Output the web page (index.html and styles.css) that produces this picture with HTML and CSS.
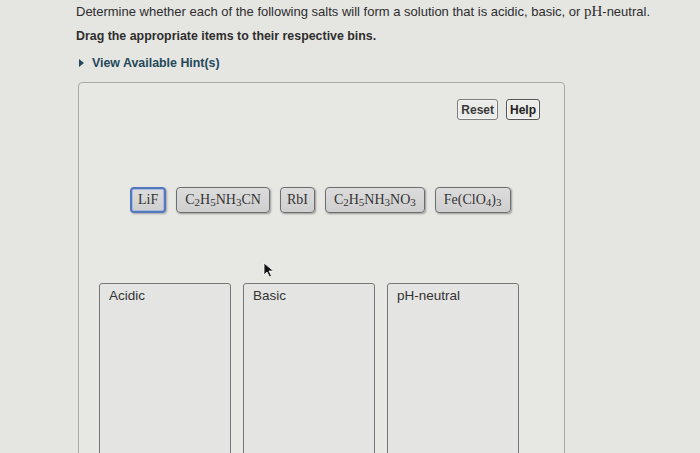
FILE: index.html
```html
<!DOCTYPE html>
<html>
<head>
<meta charset="utf-8">
<link rel="stylesheet" href="styles.css">
</head>
<body>
<div class="page">
  <p class="q">Determine whether each of the following salts will form a solution that is acidic, basic, or <span class="math">pH</span>-neutral.</p>
  <p class="instr">Drag the appropriate items to their respective bins.</p>
  <p class="hint"><span class="tri"></span>View Available Hint(s)</p>
  <div class="panel">
    <div class="tools">
      <button class="btn">Reset</button>
      <button class="btn help">Help</button>
    </div>
    <div class="items">
      <span class="chip sel">LiF</span>
      <span class="chip">C<sub>2</sub>H<sub>5</sub>NH<sub>3</sub>CN</span>
      <span class="chip short">RbI</span>
      <span class="chip">C<sub>2</sub>H<sub>5</sub>NH<sub>3</sub>NO<sub>3</sub></span>
      <span class="chip">Fe(ClO<sub>4</sub>)<sub>3</sub></span>
    </div>
    <div class="bins">
      <div class="bin"><span class="lbl">Acidic</span></div>
      <div class="bin"><span class="lbl">Basic</span></div>
      <div class="bin"><span class="lbl">pH-neutral</span></div>
    </div>
    <svg class="cursor" width="12" height="16" viewBox="0 0 12 16"><path d="M1 1 L1 13 L4 10 L6.5 15 L8.5 14 L6 9 L10.5 9 Z" fill="#111" stroke="#fff" stroke-width="0.8"/></svg>
  </div>
</div>
</body>
</html>
```
FILE: styles.css
```css
html, body {
  margin: 0;
  padding: 0;
  background: #e5e5e2;
  width: 700px;
  height: 453px;
  overflow: hidden;
  font-family: "Liberation Sans", Arial, sans-serif;
  color: #2e2e2e;
}
.page {
  padding-top: 2px;
  padding-left: 76px;
}
p { margin: 0; }
.q {
  font-size: 13px;
  line-height: 18px;
}
.math {
  font-family: "Liberation Serif", serif;
  font-size: 15px;
}
.instr {
  margin-top: 6px;
  font-size: 12.4px;
  font-weight: bold;
  line-height: 18px;
}
.hint {
  margin-top: 9px;
  font-size: 12.4px;
  font-weight: bold;
  line-height: 18px;
  color: #23495a;
  display: flex;
  align-items: center;
}
.tri {
  display: inline-block;
  width: 0;
  height: 0;
  border-left: 5px solid #23495a;
  border-top: 4.5px solid transparent;
  border-bottom: 4.5px solid transparent;
  margin-left: 3px;
  margin-right: 8px;
}
.panel {
  position: relative;
  margin-top: 10px;
  margin-left: 2px;
  width: 487px;
  height: 400px;
  border: 1px solid #a9a9a7;
  border-radius: 4px;
  background: #e7e7e4;
  box-sizing: border-box;
}
.tools {
  display: flex;
  justify-content: flex-end;
  gap: 8px;
  padding-top: 16px;
  padding-right: 24px;
}
.btn {
  font-family: "Liberation Sans", Arial, sans-serif;
  font-weight: bold;
  font-size: 12px;
  color: #3a3a3a;
  height: 21px;
  padding: 0 3px;
  border: 1px solid #7d7d7d;
  border-radius: 3px;
  background: #ebebe9;
  box-shadow: inset 0 0 0 1px #f4f4f2;
}
.help {
  border-color: #555;
  color: #222;
}
.items {
  display: flex;
  gap: 10px;
  margin-top: 67px;
  padding-left: 51px;
}
.chip {
  font-family: "Liberation Serif", "Times New Roman", serif;
  font-size: 14px;
  color: #333;
  height: 24px;
  line-height: 24px;
  padding: 0 8px;
  border: 1px solid #6e6e6e;
  border-radius: 4px;
  background: linear-gradient(#dcdcdc, #cfcfcf);
  box-shadow: 1px 1px 2px rgba(0,0,0,0.35);
}
.chip sub {
  font-size: 11px;
  line-height: 0;
  vertical-align: -2px;
}
.short {
  padding: 0 6px;
}
.sel {
  border: 2px solid #5478bd;
  height: 22px;
  line-height: 22px;
  padding: 0 6px;
  box-shadow: inset 0 0 0 1px #a9bbdd, 1px 1px 2px rgba(0,0,0,0.3);
}
.bins {
  display: flex;
  gap: 12px;
  margin-top: 70px;
  padding-left: 20px;
}
.bin {
  width: 132px;
  height: 200px;
  border: 1.5px solid #777;
  border-radius: 3px 3px 0 0;
  box-sizing: border-box;
  background: #e4e4e2;
}
.lbl {
  display: inline-block;
  margin-left: 9px;
  margin-top: 4px;
  font-size: 13.5px;
  color: #333;
}
.cursor {
  position: absolute;
  left: 184px;
  top: 179px;
}
```
